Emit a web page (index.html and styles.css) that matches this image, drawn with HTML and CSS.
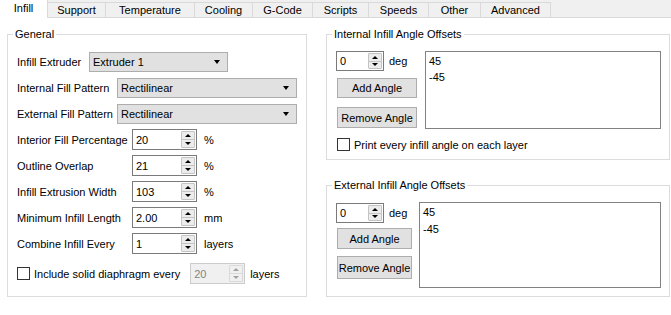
FILE: index.html
```html
<!DOCTYPE html>
<html>
<head>
<meta charset="utf-8">
<link rel="stylesheet" href="styles.css">
</head>
<body>
<div class="window">
  <div class="tabbar">
    <div class="tab active">Infill</div>
    <div class="tab">Support</div>
    <div class="tab">Temperature</div>
    <div class="tab">Cooling</div>
    <div class="tab">G-Code</div>
    <div class="tab">Scripts</div>
    <div class="tab">Speeds</div>
    <div class="tab">Other</div>
    <div class="tab">Advanced</div>
  </div>
  <div class="pane">
    <fieldset class="group general">
      <legend>General</legend>
      <div class="row-extruder">
        <span class="label">Infill Extruder</span>
        <div class="combo">Extruder 1<i class="arrow"></i></div>
      </div>
      <div class="grid-patterns">
        <span class="label">Internal Fill Pattern</span>
        <div class="combo">Rectilinear<i class="arrow"></i></div>
        <span class="label">External Fill Pattern</span>
        <div class="combo">Rectilinear<i class="arrow"></i></div>
      </div>
      <div class="grid-spins">
        <span class="label">Interior Fill Percentage</span>
        <div class="spin"><span class="val">20</span><span class="btns"><b class="up"></b><b class="dn"></b></span></div>
        <span class="unit">%</span>
        <span class="label">Outline Overlap</span>
        <div class="spin"><span class="val">21</span><span class="btns"><b class="up"></b><b class="dn"></b></span></div>
        <span class="unit">%</span>
        <span class="label">Infill Extrusion Width</span>
        <div class="spin"><span class="val">103</span><span class="btns"><b class="up"></b><b class="dn"></b></span></div>
        <span class="unit">%</span>
        <span class="label">Minimum Infill Length</span>
        <div class="spin"><span class="val">2.00</span><span class="btns"><b class="up"></b><b class="dn"></b></span></div>
        <span class="unit">mm</span>
        <span class="label">Combine Infill Every</span>
        <div class="spin"><span class="val">1</span><span class="btns"><b class="up"></b><b class="dn"></b></span></div>
        <span class="unit">layers</span>
      </div>
      <div class="check-row diaphragm">
        <span class="checkbox"></span>
        <span class="check-text">Include solid diaphragm every</span>
        <div class="spin disabled"><span class="val">20</span><span class="btns"><b class="up"></b><b class="dn"></b></span></div>
        <span class="unit">layers</span>
      </div>
    </fieldset>

    <div class="right-col">
      <fieldset class="group angles internal">
        <legend>Internal Infill Angle Offsets</legend>
        <div class="angle-body">
          <div class="angle-controls">
            <div class="deg-row">
              <div class="spin small"><span class="val">0</span><span class="btns"><b class="up"></b><b class="dn"></b></span></div>
              <span class="unit">deg</span>
            </div>
            <div class="btn add">Add Angle</div>
            <div class="btn remove">Remove Angle</div>
          </div>
          <div class="list">
            <div class="item">45</div>
            <div class="item">-45</div>
          </div>
        </div>
        <div class="check-row print">
          <span class="checkbox"></span>
          <span class="check-text">Print every infill angle on each layer</span>
        </div>
      </fieldset>

      <fieldset class="group angles external">
        <legend>External Infill Angle Offsets</legend>
        <div class="angle-body">
          <div class="angle-controls">
            <div class="deg-row">
              <div class="spin small"><span class="val">0</span><span class="btns"><b class="up"></b><b class="dn"></b></span></div>
              <span class="unit">deg</span>
            </div>
            <div class="btn add">Add Angle</div>
            <div class="btn remove">Remove Angle</div>
          </div>
          <div class="list">
            <div class="item">45</div>
            <div class="item">-45</div>
          </div>
        </div>
      </fieldset>
    </div>
  </div>
</div>
</body>
</html>
```

FILE: styles.css
```css
* { box-sizing: border-box; }

html, body {
  margin: 0;
  padding: 0;
  background: #ffffff;
}

body {
  font-family: "Liberation Sans", Arial, sans-serif;
  font-size: 11px;
  color: #000000;
}

.window {
  width: 671px;
  height: 315px;
  display: flex;
  flex-direction: column;
  overflow: hidden;
}

/* ---------- tabs ---------- */
.tabbar {
  height: 18px;
  flex: none;
  display: flex;
  align-items: flex-end;
  background: #f0f0f0;
  border-bottom: 1px solid #d9d9d9;
}

.tab {
  height: 15px;
  line-height: 14px;
  text-align: center;
  background: #f0f0f0;
  border-top: 1px solid #d9d9d9;
  border-right: 1px solid #d9d9d9;
  white-space: nowrap;
}

.tab.active {
  height: 18px;
  margin-bottom: -1px;
  line-height: 17px;
  background: #ffffff;
  border-top: none;
  padding-bottom: 1px;
}

.tab:nth-child(1) { width: 48px; }
.tab:nth-child(2) { width: 58px; }
.tab:nth-child(3) { width: 89px; }
.tab:nth-child(4) { width: 58px; }
.tab:nth-child(5) { width: 60px; }
.tab:nth-child(6) { width: 56px; }
.tab:nth-child(7) { width: 60px; }
.tab:nth-child(8) { width: 52px; }
.tab:nth-child(9) { width: 70px; }

/* ---------- pane ---------- */
.pane {
  flex: 1;
  display: grid;
  grid-template-columns: 300px 344px;
  column-gap: 19px;
  padding: 10px 0 18px 7px;
  align-items: stretch;
}

.group {
  margin: 0;
  border: 1px solid #dcdcdc;
  min-width: 0;
}

.group legend {
  padding: 0 2px;
  margin-left: -4px;
  line-height: 13px;
  height: 13px;
}

/* ---------- general ---------- */
.general {
  padding: 11px 8px 0 9px;
}

.row-extruder {
  display: grid;
  grid-template-columns: 72px 139px;
  align-items: center;
  height: 20px;
}

.grid-patterns {
  display: grid;
  grid-template-columns: 100px 180px;
  grid-auto-rows: 20px;
  row-gap: 6px;
  align-items: center;
  margin-top: 6px;
}

.grid-spins {
  display: grid;
  grid-template-columns: 108px 65px auto;
  grid-auto-rows: 21px;
  row-gap: 5px;
  column-gap: 7px;
  align-items: center;
  margin-top: 5px;
}

.label { white-space: nowrap; }

.combo {
  position: relative;
  height: 100%;
  background: #e1e1e1;
  border: 1px solid #adadad;
  padding-left: 3px;
  display: flex;
  align-items: center;
}

.combo .arrow {
  position: absolute;
  right: 7px;
  top: 7px;
  width: 0;
  height: 0;
  border-left: 3.5px solid transparent;
  border-right: 3.5px solid transparent;
  border-top: 4px solid #000000;
}

/* ---------- spin box ---------- */
.spin {
  height: 21px;
  display: flex;
  align-items: stretch;
  background: #ffffff;
  border: 1px solid #7a7a7a;
}

.spin .val {
  flex: 1;
  display: flex;
  align-items: center;
  padding-left: 3px;
}

.spin .btns {
  width: 14px;
  margin: 1px 1px 1px 0;
  display: flex;
  flex-direction: column;
  border: 1px solid #c4c4c4;
  border-radius: 1px;
  background: #ececec;
}

.spin .btns b {
  flex: 1;
  display: flex;
  align-items: center;
  justify-content: center;
}

.spin .btns b.up { border-bottom: 1px solid #c4c4c4; }

.spin .btns b.up::before {
  content: "";
  border-left: 3px solid transparent;
  border-right: 3px solid transparent;
  border-bottom: 3px solid #000000;
}

.spin .btns b.dn::before {
  content: "";
  border-left: 3px solid transparent;
  border-right: 3px solid transparent;
  border-top: 3px solid #000000;
}

.spin.disabled {
  border-color: #cccccc;
  background: #f0f0f0;
  color: #838383;
}

.spin.disabled .btns { border-color: #d9d9d9; background: #f0f0f0; }
.spin.disabled .btns b.up { border-bottom-color: #d9d9d9; }
.spin.disabled .btns b.up::before { border-bottom-color: #a0a0a0; }
.spin.disabled .btns b.dn::before { border-top-color: #a0a0a0; }

.unit { white-space: nowrap; }

/* ---------- checkbox rows ---------- */
.checkbox {
  width: 13px;
  height: 13px;
  flex: none;
  border: 1px solid #333333;
  background: #ffffff;
}

.check-row {
  display: flex;
  align-items: center;
}

.check-text { margin-left: 4px; white-space: nowrap; }

.diaphragm {
  margin-top: 9px;
  height: 21px;
}

.diaphragm .spin {
  width: 55px;
  margin-left: 10px;
}

.diaphragm .unit { margin-left: 5px; }

/* ---------- angle groups ---------- */
.right-col {
  display: flex;
  flex-direction: column;
}

.angles {
  padding: 10px 8px 0 9px;
}

.internal {
  height: 132px;
  flex: none;
}

.external {
  flex: 1;
  margin-top: 19px;
  padding-bottom: 8px;
  display: flex;
  flex-direction: column;
}

.angle-body {
  display: flex;
  align-items: flex-start;
}

.angle-controls {
  display: flex;
  flex-direction: column;
  align-items: flex-start;
  margin-right: 8px;
}

.deg-row {
  display: flex;
  align-items: center;
  height: 20px;
}

.spin.small {
  width: 48px;
  height: 20px;
}

.deg-row .unit { margin-left: 5px; }

.btn {
  width: 80px;
  margin-left: 1px;
  background: #e1e1e1;
  border: 1px solid #adadad;
  display: flex;
  align-items: center;
  justify-content: center;
}

.internal .btn.add { height: 20px; margin-top: 7px; }
.internal .btn.remove { height: 21px; margin-top: 9px; }

.list {
  flex: 1;
  border: 1px solid #828282;
  background: #ffffff;
  padding: 1px 0 0 3px;
}

.item { height: 16px; line-height: 16px; }

.internal .list { height: 78px; }

.print {
  margin-top: 9px;
}

.print .checkbox { margin-left: 1px; }

.external .angle-body { flex: 1; align-items: stretch; }
.external .deg-row { margin-top: 1px; }
.external .btn { width: 75px; }
.external .btn.add { height: 21px; margin-top: 5px; }
.external .btn.remove { height: 23px; margin-top: 7px; }
.external .angle-controls { margin-right: 7px; }
.external .list { margin-left: 0; }
.external .item { height: 17px; line-height: 17px; }
```
